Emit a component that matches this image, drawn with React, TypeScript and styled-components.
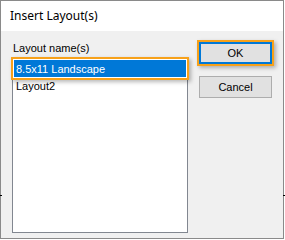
import React from "react";
import styled, { createGlobalStyle } from "styled-components";

const Global = createGlobalStyle`
  html, body { margin: 0; padding: 0; background: #ffffff; }
  * { box-sizing: border-box; }
`;

const Window = styled.div`
  position: relative;
  width: 284px;
  height: 239px;
  border: 1px solid #8a8a8a;
  display: flex;
  flex-direction: column;
  background: #f0f0f0;
`;

const TitleBar = styled.div`
  height: 30px;
  background: #ffffff;
  padding-left: 9px;
  font-family: "Noto Sans", "Open Sans", sans-serif;
  font-size: 12px;
  line-height: 30px;
  color: #000000;
`;

const Body = styled.div`
  flex: 1;
  display: flex;
  padding: 11px 11px 5px 11px;
  font-family: "Liberation Sans", Arial, sans-serif;
  font-size: 11px;
  color: #000000;
`;

const LeftCol = styled.div`
  display: flex;
  flex-direction: column;
`;

const Label = styled.div`
  line-height: 13px;
  padding-left: 1px;
  margin-bottom: 3px;
`;

const ListBox = styled.div`
  width: 176px;
  height: 175px;
  border: 1px solid #828790;
  background: #ffffff;
  padding: 1px;
`;

const Item = styled.div<{ $selected?: boolean }>`
  position: relative;
  height: 17px;
  line-height: 18px;
  padding-left: 2px;
  background: ${(p) => (p.$selected ? "#0078d7" : "transparent")};
  color: ${(p) => (p.$selected ? "#ffffff" : "#000000")};
  white-space: nowrap;
`;

const Highlight = styled.div<{ $inset: number }>`
  position: absolute;
  top: ${(p) => -p.$inset}px;
  left: ${(p) => -p.$inset}px;
  right: ${(p) => -p.$inset}px;
  bottom: ${(p) => -p.$inset}px;
  border: 2px solid #f7a11a;
  box-shadow: 2px 2px 4px rgba(0, 0, 0, 0.28);
  pointer-events: none;
`;

const RightCol = styled.div`
  display: flex;
  flex-direction: column;
  gap: 12px;
  margin-left: 11px;
`;

const Button = styled.div<{ $default?: boolean }>`
  position: relative;
  width: 73px;
  height: 22px;
  border: ${(p) => (p.$default ? "2px solid #0078d7" : "1px solid #adadad")};
  background: #e1e1e1;
  display: flex;
  align-items: center;
  justify-content: center;
  font-family: "Liberation Sans", Arial, sans-serif;
  font-size: 11px;
  color: #000000;
`;

const Tick = styled.div<{ $side: "left" | "right" }>`
  position: absolute;
  top: 194px;
  ${(p) => (p.$side === "left" ? "left: -1px;" : "right: -2px;")}
  width: 2px;
  height: 1px;
  background: #000000;
`;

export default function App() {
  return (
    <>
      <Global />
      <Window>
        <TitleBar>Insert Layout(s)</TitleBar>
        <Body>
          <LeftCol>
            <Label>Layout name(s)</Label>
            <ListBox>
              <Item $selected>
                8.5x11 Landscape
                <Highlight $inset={3} />
              </Item>
              <Item>Layout2</Item>
            </ListBox>
          </LeftCol>
          <RightCol>
            <Button $default>
              OK
              <Highlight $inset={4} />
            </Button>
            <Button>Cancel</Button>
          </RightCol>
        </Body>
        <Tick $side="left" />
        <Tick $side="right" />
      </Window>
    </>
  );
}
